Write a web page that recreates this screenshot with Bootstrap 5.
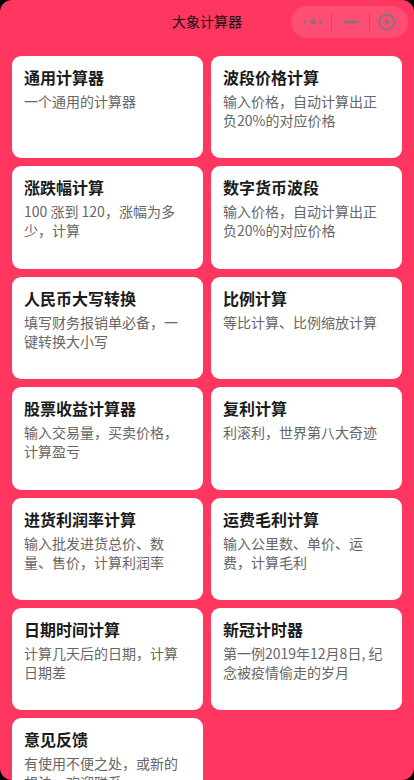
<!DOCTYPE html>
<html lang="zh">
<head>
<meta charset="utf-8">
<meta name="viewport" content="width=device-width, initial-scale=1">
<link href="https://cdn.jsdelivr.net/npm/bootstrap@5.3.0/dist/css/bootstrap.min.css" rel="stylesheet">
<style>
html,body{height:780px;overflow:hidden;}
body{background:#ff3660;font-family:"Noto Sans CJK SC","Liberation Sans",sans-serif;}
.app-head{height:44px;}
.app-title{font-size:14px;color:#111;line-height:42px;}
.capsule{position:absolute;top:6px;right:6px;width:117px;height:32px;border-radius:16px;background:rgba(255,255,255,.12);}
.capsule>div{box-sizing:border-box;}
.cap-more{width:40px;padding-left:4px;}
.cap-min{width:38px;}
.cap-close{width:39px;padding-right:4px;}
.capsule>div+div{border-left:1px solid rgba(120,70,80,.35);height:18px;}
.tool-grid{display:grid;grid-template-columns:191px 191px;gap:8px;padding:12px 12px 0;grid-auto-rows:102.4px;}
.tool-card{background:#fff;border-radius:9px;padding:10px 12px;}
.tool-title{font-size:16px;font-weight:700;color:#1b1b1b;line-height:22px;margin:0;}
.tool-desc{font-size:14px;color:#666;line-height:19px;margin:4px 0 0;}
.screen-edge{position:fixed;inset:0;border-radius:12px;box-shadow:0 0 0 20px #000;pointer-events:none;}
</style>
</head>
<body>
<header class="app-head position-relative text-center">
  <div class="app-title">大象计算器</div>
  <div class="capsule d-flex align-items-center">
    <div class="cap-more d-flex justify-content-center"><svg width="22" height="8" viewBox="0 0 22 8"><circle cx="3" cy="4" r="1.8" fill="#8f7078"/><circle cx="11" cy="4" r="2.800" fill="#8f7078"/><circle cx="19" cy="4" r="1.800" fill="#8f7078"/></svg></div>
    <div class="cap-min d-flex justify-content-center align-items-center"><svg width="16" height="4" viewBox="0 0 16 4"><rect y="0.500" width="16" height="3" rx="1.500" fill="#8f7078"/></svg></div>
    <div class="cap-close d-flex justify-content-center align-items-center"><svg width="18" height="18" viewBox="0 0 18 18"><circle cx="9" cy="9" r="7.500" fill="none" stroke="#8f7078" stroke-width="2"/><circle cx="9" cy="9" r="2.500" fill="#8f7078"/></svg></div>
  </div>
</header>
<main class="tool-grid">
  <div class="tool-card"><h2 class="tool-title">通用计算器</h2><p class="tool-desc">一个通用的计算器</p></div>
  <div class="tool-card"><h2 class="tool-title">波段价格计算</h2><p class="tool-desc">输入价格，自动计算出正负20%的对应价格</p></div>
  <div class="tool-card"><h2 class="tool-title">涨跌幅计算</h2><p class="tool-desc">100 涨到 120，涨幅为多少，计算</p></div>
  <div class="tool-card"><h2 class="tool-title">数字货币波段</h2><p class="tool-desc">输入价格，自动计算出正负20%的对应价格</p></div>
  <div class="tool-card"><h2 class="tool-title">人民币大写转换</h2><p class="tool-desc">填写财务报销单必备，一键转换大小写</p></div>
  <div class="tool-card"><h2 class="tool-title">比例计算</h2><p class="tool-desc">等比计算、比例缩放计算</p></div>
  <div class="tool-card"><h2 class="tool-title">股票收益计算器</h2><p class="tool-desc">输入交易量，买卖价格，计算盈亏</p></div>
  <div class="tool-card"><h2 class="tool-title">复利计算</h2><p class="tool-desc">利滚利，世界第八大奇迹</p></div>
  <div class="tool-card"><h2 class="tool-title">进货利润率计算</h2><p class="tool-desc">输入批发进货总价、数量、售价，计算利润率</p></div>
  <div class="tool-card"><h2 class="tool-title">运费毛利计算</h2><p class="tool-desc">输入公里数、单价、运费，计算毛利</p></div>
  <div class="tool-card"><h2 class="tool-title">日期时间计算</h2><p class="tool-desc">计算几天后的日期，计算日期差</p></div>
  <div class="tool-card"><h2 class="tool-title">新冠计时器</h2><p class="tool-desc">第一例2019年12月8日, 纪念被疫情偷走的岁月</p></div>
  <div class="tool-card"><h2 class="tool-title">意见反馈</h2><p class="tool-desc">有使用不便之处，或新的想法，欢迎联系</p></div>
</main>
<div class="screen-edge"></div>
<script src="https://cdn.jsdelivr.net/npm/bootstrap@5.3.0/dist/js/bootstrap.bundle.min.js"></script>
</body>
</html>
